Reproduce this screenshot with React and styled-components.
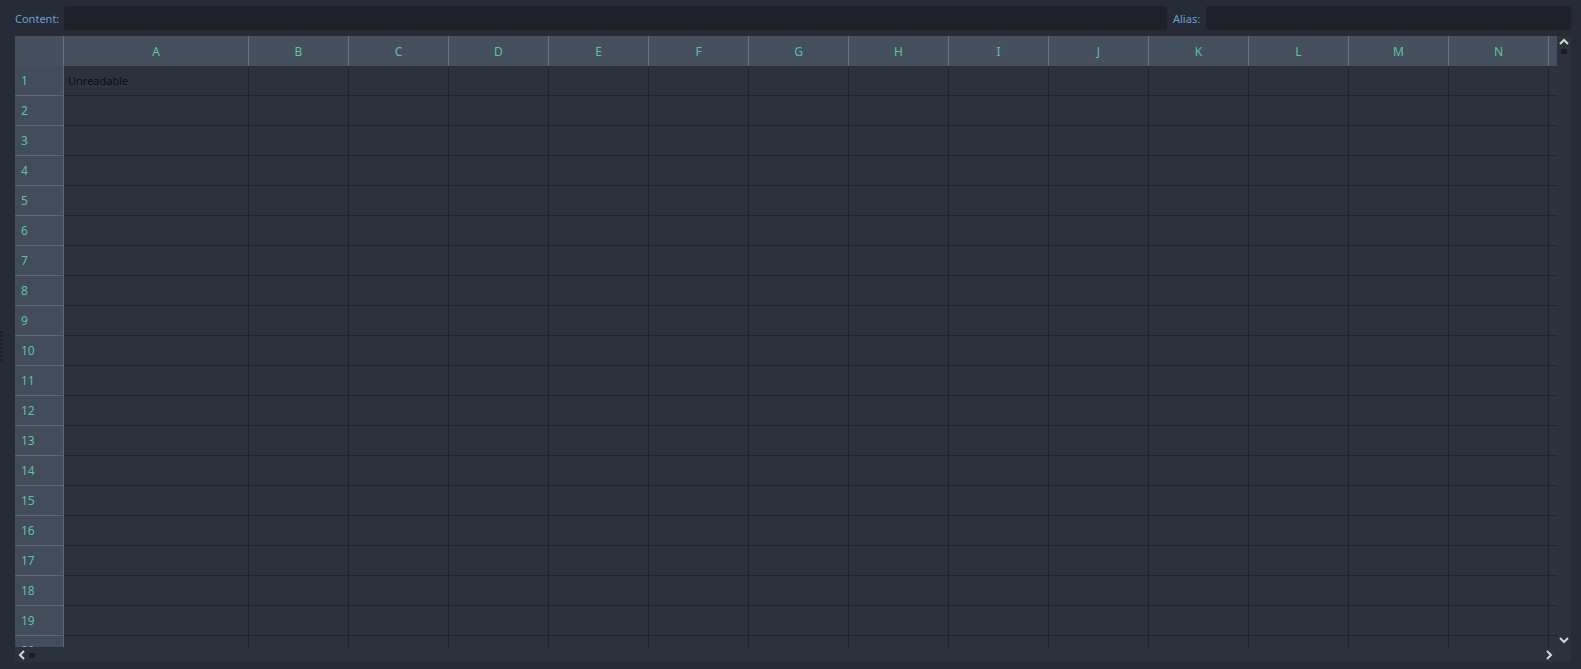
import React from 'react';
import styled, { createGlobalStyle } from 'styled-components';

const Global = createGlobalStyle`
  html, body {
    margin: 0;
    padding: 0;
    background: #262b35;
    overflow: hidden;
  }
  * { box-sizing: border-box; }
`;

const Page = styled.div`
  display: flex;
  width: 1581px;
  height: 669px;
  background: #262b35;
  font-family: "Noto Sans", "Open Sans", sans-serif;
  font-size: 11px;
`;

const Handle = styled.div`
  width: 15px;
  display: flex;
  align-items: center;
  padding-top: 24px;
`;

const Grip = styled.div`
  width: 3px;
  height: 32px;
  background: repeating-linear-gradient(#1b1f26 0 2px, transparent 2px 4px);
`;

const Main = styled.div`
  flex: 1;
  display: flex;
  flex-direction: column;
  padding-right: 10px;
  padding-bottom: 7px;
`;

const Bar = styled.div`
  height: 36px;
  display: flex;
  align-items: center;
`;

const Label = styled.span`
  color: #6b9fd8;
  width: ${p => p.$w}px;
  margin-left: ${p => p.$ml || 0}px;
  flex-shrink: 0;
`;

const Field = styled.div`
  height: 24px;
  background: #1e2228;
  border-radius: 3px;
  flex: ${p => (p.$w ? `0 0 ${p.$w}px` : 1)};
`;

const Panel = styled.div`
  flex: 1;
  display: grid;
  grid-template-columns: 1fr 14px;
  grid-template-rows: 1fr 15px;
  background: #2c323c;
  min-height: 0;
`;

const Viewport = styled.div`
  overflow: hidden;
  background: #2c323c;
`;

const Row = styled.div`
  display: flex;
  height: 30px;
`;

const Corner = styled.div`
  width: 49px;
  flex-shrink: 0;
  background: #454f5d;
  border-right: 1px solid #667080;
`;

const ColHead = styled.div`
  width: ${p => p.$w}px;
  flex-shrink: 0;
  background: #454f5d;
  border-right: 1px solid #667080;
  color: #5cc39d;
  font-size: 12px;
  display: flex;
  align-items: center;
  justify-content: center;
`;

const RowHead = styled.div`
  width: 49px;
  flex-shrink: 0;
  background: #434c5a;
  border-bottom: 1px solid #5d6675;
  border-right: 1px solid #5d6675;
  color: #5cc39d;
  font-size: 12px;
  display: flex;
  align-items: center;
  padding-left: 6px;
`;

const Cell = styled.div`
  width: ${p => p.$w}px;
  flex-shrink: 0;
  background: #2d333d;
  border-right: 1px solid #20242b;
  border-bottom: 1px solid #20242b;
  color: #0b0d10;
  display: flex;
  align-items: center;
  padding-left: 4px;
  white-space: nowrap;
  overflow: hidden;
`;

const VScroll = styled.div`
  display: flex;
  flex-direction: column;
  align-items: center;
  justify-content: space-between;
  padding: 2px 0 3px;
`;

const HScroll = styled.div`
  display: flex;
  align-items: center;
  padding: 0 4px 0 3px;
`;

const Thumb = styled.div`
  width: 6px;
  height: 5px;
  background: #1a1e24;
  margin: ${p => p.$m};
`;

const Spacer = styled.div`
  flex: 1;
`;

const Chevron = ({ dir }) => {
  const paths = {
    up: 'M1 6 L5 2 L9 6',
    down: 'M1 2 L5 6 L9 2',
    left: 'M6 1 L2 5 L6 9',
    right: 'M2 1 L6 5 L2 9',
  };
  const vertical = dir === 'up' || dir === 'down';
  return (
    <svg
      width={vertical ? 10 : 8}
      height={vertical ? 8 : 10}
      viewBox={vertical ? '0 0 10 8' : '0 0 8 10'}
      style={{ display: 'block' }}
    >
      <path d={paths[dir]} fill="none" stroke="#d2d6dc" strokeWidth="2" />
    </svg>
  );
};

const columns = ['A', 'B', 'C', 'D', 'E', 'F', 'G', 'H', 'I', 'J', 'K', 'L', 'M', 'N', ''];
const widthOf = c => (c === 'A' ? 185 : 100);
const rows = Array.from({ length: 20 }, (_, i) => i + 1);

export default function App() {
  return (
    <Page>
      <Global />
      <Handle>
        <Grip />
      </Handle>
      <Main>
        <Bar>
          <Label $w={49}>Content:</Label>
          <Field />
          <Label $w={33} $ml={6}>Alias:</Label>
          <Field $w={365} />
        </Bar>
        <Panel>
          <Viewport>
            <Row>
              <Corner />
              {columns.map((c, i) => (
                <ColHead key={i} $w={widthOf(c)}>{c}</ColHead>
              ))}
            </Row>
            {rows.map(r => (
              <Row key={r}>
                <RowHead>{r}</RowHead>
                {columns.map((c, i) => (
                  <Cell key={i} $w={widthOf(c)}>
                    {r === 1 && c === 'A' ? 'Unreadable' : ''}
                  </Cell>
                ))}
              </Row>
            ))}
          </Viewport>
          <VScroll>
            <div>
              <Chevron dir="up" />
              <Thumb $m="3px auto 0" />
            </div>
            <Chevron dir="down" />
          </VScroll>
          <HScroll>
            <Chevron dir="left" />
            <Thumb $m="2px 0 0 3px" />
            <Spacer />
            <Chevron dir="right" />
          </HScroll>
          <div />
        </Panel>
      </Main>
    </Page>
  );
}
